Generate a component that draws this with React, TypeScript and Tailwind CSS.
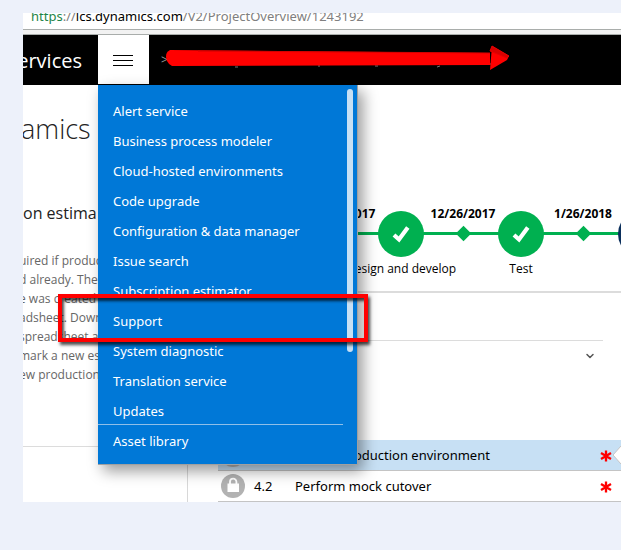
import { ChevronDown } from 'lucide-react'

interface Phase {
  date: string
  label: string
  done: boolean
}

interface Task {
  id: string
  name: string
  active: boolean
}

const MENU_ITEMS = [
  'Alert service',
  'Business process modeler',
  'Cloud-hosted environments',
  'Code upgrade',
  'Configuration & data manager',
  'Issue search',
  'Subscription estimator',
  'Support',
  'System diagnostic',
  'Translation service',
  'Updates',
  'Asset library',
]

const ESTIMATOR_LINES = [
  'uired if produc',
  'd already. The e',
  'e was created b',
  'adsheet. Down',
  'spreadsheet an',
  'mark a new esti',
  'ew production',
]

const PHASES: Phase[] = [
  { date: '11/26/2017', label: 'Design and develop', done: true },
  { date: '12/26/2017', label: 'Test', done: true },
  { date: '1/26/2018', label: '', done: false },
]

const TASKS: Task[] = [
  { id: '4.1', name: 'Deploy production environment', active: true },
  { id: '4.2', name: 'Perform mock cutover', active: false },
]

function CheckIcon() {
  return (
    <svg className="w-5 h-5" viewBox="0 0 20 20" fill="none" stroke="#fff" strokeWidth="4.2">
      <path d="M3 11 L8 15.5 L16.8 3.5" />
    </svg>
  )
}

function LockIcon() {
  return (
    <svg className="w-6 h-6 block" viewBox="0 0 24 24">
      <circle cx="12" cy="12" r="12" fill="#b2b2b2" />
      <rect x="6.5" y="9.5" width="11.5" height="8.5" fill="#fff" />
      <path d="M9 10 V7.8 a3.2 3.2 0 0 1 6.4 0 V10" fill="none" stroke="#fff" strokeWidth="1.8" />
    </svg>
  )
}

function RequiredIcon() {
  return (
    <svg className="w-3 h-3 block" viewBox="0 0 12 12" stroke="#f00" strokeWidth="2.3">
      <path d="M6 0.5 V11.5 M1 3 L11 9 M11 3 L1 9" />
    </svg>
  )
}

function RedactArrow() {
  return (
    <svg className="w-[352px] h-[50px] shrink-0" viewBox="0 0 352 50">
      <path
        d="M77 32 h3 M160 31 h2 M217 31 h3 M282 31 l-3 1 M290 29 h46"
        stroke="#777"
        strokeDasharray="5 2"
        fill="none"
      />
      <path d="M12 15 L332 18 V30 L14 31 Q11 30 9 26 Q6 18 12 15 Z" fill="#f00" />
      <path d="M334 11 L351 21 L349 25 L332 35 Z" fill="#f00" />
      <path d="M334 11 L351 21 L349 23 L332 16 Z" fill="#d80000" stroke="#e80000" />
      <path d="M40 16 L332 18" stroke="#d40000" fill="none" />
    </svg>
  )
}

function ServiceMenu() {
  return (
    <nav className="absolute z-10 left-0 top-full w-[260px] flex items-start bg-[#0078d7] border-r border-b border-[#a0a0a0] shadow-[5px_6px_14px_rgba(0,0,0,0.4)] pt-[11px] pb-2">
      <ul className="flex-1 text-[13px] leading-[30px] text-white font-['Noto_Sans',sans-serif]">
        {MENU_ITEMS.map((item) => (
          <li
            key={item}
            className={`relative ${item === 'Updates' ? 'h-[29px] mb-px border-b border-[#8fbfe8]' : 'h-[30px]'}`}
          >
            <a href="#" className="block pl-[15px] whitespace-nowrap">{item}</a>
            {item === 'Support' && (
              <span className="absolute z-10 -left-10 -right-[25px] -top-3 -bottom-1.5 border-4 border-[#f00] pointer-events-none shadow-[2px_3px_3px_rgba(0,0,0,0.7),inset_2px_3px_3px_rgba(0,0,0,0.7)]" />
            )}
          </li>
        ))}
      </ul>
      <div className="w-1.5 h-[263px] -mt-[7px] mx-1 rounded-full bg-[#c7e0f4]" />
    </nav>
  )
}

function Timeline() {
  return (
    <div className="relative flex pl-[92px] h-[85px] text-xs leading-4 text-black">
      <div className="absolute left-0 right-0 top-[26px] h-[3px] bg-[#00b050]" />
      {PHASES.map((phase) => (
        <div key={phase.date} className="relative w-[120px] pr-1 shrink-0 flex">
          <div className="w-[66px] shrink-0 flex flex-col items-center">
            <span className="font-bold whitespace-nowrap">{phase.date}</span>
            <span className="w-[11px] h-[11px] mt-1.5 rotate-45 bg-[#00b050]" />
          </div>
          <div className="w-[50px] shrink-0 flex flex-col items-center pt-[5px]">
            <span
              className={`w-[46px] h-[46px] shrink-0 rounded-full flex items-center justify-center ${
                phase.done ? 'bg-[#00b050]' : 'bg-[#0078d7] border-3 border-[#0b2f5c]'
              }`}
            >
              {phase.done && <CheckIcon />}
            </span>
            <span className="mt-1 whitespace-nowrap">{phase.label}</span>
          </div>
        </div>
      ))}
    </div>
  )
}

function TaskTable() {
  return (
    <table className="w-full border-separate border-spacing-0 text-[13px] text-black font-['Noto_Sans',sans-serif]">
      <tbody>
        {TASKS.map((task) => (
          <tr key={task.id} className={`h-[31px] *:border-b *:border-[#c4c4c4] ${task.active ? 'bg-[#c7e0f4]' : ''}`}>
            <td className="w-9 p-0 pl-[3px]"><LockIcon /></td>
            <td className="w-[41px] p-0 pt-0.5">{task.id}</td>
            <td className="p-0 pt-0.5 whitespace-nowrap">{task.name}</td>
            <td className="w-[21px] p-0 pt-0.5 relative">
              <RequiredIcon />
              {task.active && (
                <svg className="absolute right-0 top-1.5 w-2 h-[18px]" viewBox="0 0 8 18">
                  <path d="M8 0 L0 9 L8 18" fill="#fff" stroke="#c4c4c4" />
                </svg>
              )}
            </td>
          </tr>
        ))}
      </tbody>
    </table>
  )
}

export default function App() {
  return (
    <div className="min-h-screen bg-[#edf1fa] pt-[13px] pl-[23px] pb-12 overflow-hidden font-['Open_Sans','Noto_Sans',sans-serif]">
      <div className="bg-white overflow-hidden">
        <div className="h-4 flex items-end pl-2 overflow-hidden">
          <p className="text-[13px] leading-5 text-[#808080] whitespace-nowrap mb-[3px] font-['Noto_Sans',sans-serif]">
            <span className="text-[#1e8449]">https</span>://<span className="text-black">lcs.dynamics.com</span>/V2/ProjectOverview/1243192
          </p>
        </div>
        <div className="h-1.5 bg-[#f2f2f2] border-y border-[#a9adab]" />

        <header className="h-[50px] bg-black flex text-white">
          <div className="w-[75px] shrink-0 flex items-center justify-end pt-0.5 pr-4 overflow-hidden">
            <span className="text-xl">ervices</span>
          </div>
          <div className="relative shrink-0">
            <button aria-label="Services menu" className="w-[51px] h-[49px] pt-0.5 pr-0.5 bg-white flex flex-col items-center justify-center gap-1">
              <span className="w-5 h-px bg-black" />
              <span className="w-5 h-px bg-black" />
              <span className="w-5 h-px bg-black" />
            </button>
            <ServiceMenu />
          </div>
          <div className="flex-1 flex items-center pl-3 overflow-hidden text-[#999]">
            <span className="text-xs -mr-[10px]">&gt;</span>
            <RedactArrow />
          </div>
        </header>

        <main className="flex">
          <aside className="w-[165px] shrink-0 border-r border-[#d8d8d8] overflow-hidden">
            <div className="h-[362px] border-b border-[#dcdcdc]">
              <h1 className="pt-6 -ml-0.5 text-[27px] leading-10 font-light text-[#222]">amics</h1>
              <h2 className="mt-[54px] text-base leading-5 text-[#222] whitespace-nowrap">on estima</h2>
              <div className="mt-7 -ml-1 text-xs leading-[19px] text-[#666] whitespace-nowrap">
                {ESTIMATOR_LINES.map((line) => (
                  <p key={line}>{line}</p>
                ))}
              </div>
            </div>
          </aside>

          <section className="flex-1 min-w-0 ml-[30px] pt-[121px]">
            <Timeline />
            <div className="h-[50px] border-t-2 border-t-[#dcdcdc] flex flex-col justify-end">
              <div className="h-px mr-[18px] bg-[#dcdcdc]" />
            </div>
            <div className="h-[99px] flex justify-end pt-2 pr-[25px]">
              <button aria-label="Expand section" className="h-3.5 flex items-center">
                <ChevronDown className="w-3 h-3 text-[#555]" strokeWidth={3} />
              </button>
            </div>
            <TaskTable />
          </section>
        </main>
      </div>
    </div>
  )
}
